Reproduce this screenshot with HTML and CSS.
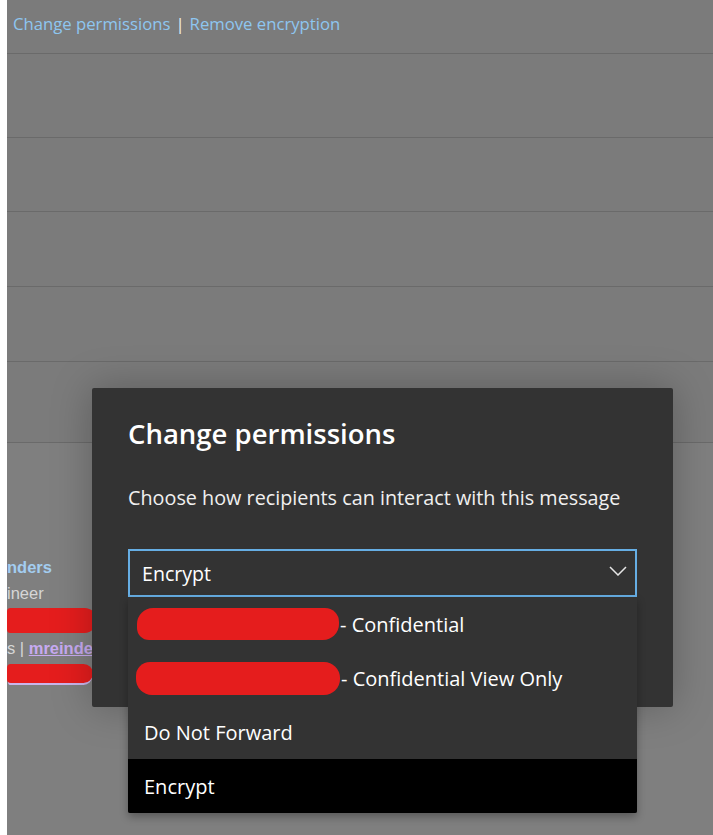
FILE: index.html
```html
<!DOCTYPE html>
<html>
<head>
<meta charset="utf-8">
<link rel="stylesheet" href="styles.css">
</head>
<body>
<div class="page">
  <div class="gutter"></div>
  <main class="content">
    <div class="toolbar"><a class="link">Change permissions</a><span class="sep">|</span><a class="link">Remove encryption</a></div>
    <div class="row r1"></div>
    <div class="row r2"></div>
    <div class="row r3"></div>
    <div class="row r4"></div>
    <div class="row r5"></div>
    <div class="sig">
      <div class="sig-name">nders</div>
      <div class="sig-title">ineer</div>
      <div class="sig-line sl1"><span class="scribble s-left1"></span></div>
      <div class="sig-line sig-mail"><span class="grey">s | </span><a class="mail">mreinders</a></div>
      <div class="sig-line"><span class="scribble s-left2"></span></div>
    </div>
  </main>
</div>

<div class="dialog">
  <h1 class="dlg-title">Change permissions</h1>
  <p class="dlg-text">Choose how recipients can interact with this message</p>
  <div class="select">
    <div class="select-box">
      <span class="select-value">Encrypt</span>
      <svg class="chev" width="18" height="10" viewBox="0 0 18 10"><path d="M1 1 L9 9 L17 1" fill="none" stroke="#e6e6e6" stroke-width="1.5"/></svg>
    </div>
    <ul class="options">
      <li class="opt"><span class="scribble s-opt1"></span>- Confidential</li>
      <li class="opt"><span class="scribble s-opt2"></span>- Confidential View Only</li>
      <li class="opt">Do Not Forward</li>
      <li class="opt selected">Encrypt</li>
    </ul>
  </div>
</div>
</body>
</html>
```

FILE: styles.css
```css
html, body {
  margin: 0;
  padding: 0;
  height: 835px;
  overflow: hidden;
  background: #ffffff;
}

.page {
  display: flex;
  height: 835px;
}

.gutter {
  width: 7px;
  background: #ffffff;
  flex: none;
}

.content {
  flex: 1;
  background: #7b7b7b;
  overflow: hidden;
  font-family: "Open Sans", "Noto Sans", sans-serif;
}

.toolbar {
  height: 54px;
  box-sizing: border-box;
  border-bottom: 1px solid #6a6a6a;
  padding: 11px 0 0 6px;
  font-size: 16.7px;
  line-height: 26px;
  white-space: nowrap;
}

.link {
  color: #8ec6f0;
}

.sep {
  color: #f2f2f2;
  margin: 0 5px;
}

.row {
  border-bottom: 1px solid #6a6a6a;
}
.r1 { height: 83px; }
.r2 { height: 73px; }
.r3 { height: 74px; }
.r4 { height: 74px; }
.r5 { height: 80px; }

.sig {
  background: #7f7f7f;
  padding-top: 111px;
  height: 400px;
  font-family: "Liberation Sans", Arial, sans-serif;
  font-size: 16.5px;
  line-height: 26px;
  white-space: nowrap;
}

.sig-name {
  color: #a3cdf0;
  font-weight: bold;
}

.sig-title {
  color: #d6d6d6;
}

.sig-line {
  height: 27px;
}

.sl1 {
  height: 29px;
}

.grey { color: #d6d6d6; }

.mail {
  color: #c7aaf2;
  font-weight: bold;
  text-decoration: underline;
}

.scribble {
  display: inline-block;
  background: #e51d1d;
  border-radius: 16px;
}

.s-left1 {
  width: 90px;
  height: 25px;
  margin-top: 2px;
  vertical-align: top;
  border-radius: 4px 14px 14px 4px;
}

.s-left2 {
  width: 86px;
  height: 19px;
  margin-top: 2px;
  vertical-align: top;
  border-radius: 4px 10px 10px 4px;
  box-shadow: 0 3px 0 -1px #c9b5ec;
}

.dialog {
  position: absolute;
  left: 92px;
  top: 388px;
  width: 581px;
  height: 319px;
  box-sizing: border-box;
  background: #333333;
  border-radius: 2px;
  padding: 28px 36px 0 36px;
  box-shadow: 0 0 40px rgba(0, 0, 0, 0.25);
  font-family: "Open Sans", "Noto Sans", sans-serif;
  color: #ffffff;
}

.dlg-title {
  margin: 0;
  font-size: 27.5px;
  font-weight: 600;
  line-height: 36px;
  letter-spacing: 0;
}

.dlg-text {
  margin: 33px 0 0 0;
  font-size: 19.8px;
  line-height: 26px;
  color: #f0f0f0;
}

.select {
  position: relative;
  margin-top: 38px;
  width: 509px;
}

.select-box {
  height: 48px;
  box-sizing: border-box;
  border: 2px solid #66aee4;
  display: flex;
  align-items: center;
  justify-content: space-between;
  padding: 0 8px 0 12px;
  font-size: 19.6px;
}

.select-value {
  padding-top: 1px;
}

.chev {
  margin-top: -4px;
}

.options {
  position: absolute;
  left: 0;
  top: 48px;
  width: 509px;
  margin: 0;
  padding: 0;
  list-style: none;
  background: #333333;
  box-shadow: 0 4px 8px rgba(0, 0, 0, 0.3);
  border-radius: 0 0 2px 2px;
}

.opt {
  height: 54px;
  display: flex;
  align-items: center;
  padding-left: 16px;
  font-size: 20px;
  color: #ffffff;
  white-space: nowrap;
}

.opt.selected {
  background: #000000;
  border-radius: 0 0 2px 2px;
}

.s-opt1 {
  width: 202px;
  height: 32px;
  margin-left: -7px;
  margin-right: 1px;
  border-radius: 16px 14px 16px 12px;
}

.s-opt2 {
  width: 204px;
  height: 33px;
  margin-left: -8px;
  margin-right: 1px;
  border-radius: 14px 16px 16px 16px;
}
```
